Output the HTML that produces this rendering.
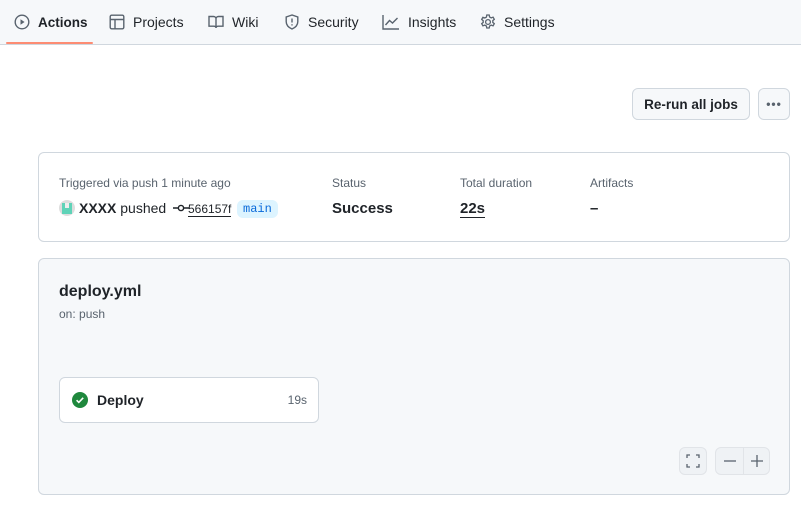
<!DOCTYPE html>
<html><head><meta charset="utf-8"><style>
*{box-sizing:border-box;margin:0;padding:0}
body{width:801px;height:510px;overflow:hidden;background:#fff;font-family:"Liberation Sans",sans-serif;color:#1f2328;position:relative}
.nav{position:absolute;left:0;top:0;width:801px;height:45px;background:#f6f8fa;border-bottom:1px solid #d0d7de}
.tab{position:absolute;top:0;height:44px;display:flex;align-items:center;font-size:14px;color:#1f2328}
.tab svg{margin-right:8px}
.ul{position:absolute;left:6px;top:42px;width:87px;height:2px;background:#fd8c73;border-radius:2px}
.btn{position:absolute;border:1px solid #d0d7de;background:#f6f8fa;border-radius:6px;font-size:14px;font-weight:bold;display:flex;align-items:center;justify-content:center}
.card{position:absolute;border:1px solid #d0d7de;border-radius:6px}
.lbl{position:absolute;font-size:12px;color:#59636e}
.val{position:absolute;font-size:15px;font-weight:bold}
</style></head><body>
<div class="nav">
<div class="tab" style="left:14px;font-weight:bold;font-size:13.5px"><svg width="16" height="16" viewBox="0 0 16 16" fill="none" stroke="#59636e" stroke-width="1.4"><circle cx="8" cy="8" r="6.8"/><path d="M6.5 5.3v5.4L10.6 8z" fill="#59636e" stroke="none"/></svg>Actions</div>
<div class="tab" style="left:109px"><svg width="16" height="16" viewBox="0 0 16 16" fill="none" stroke="#59636e" stroke-width="1.4"><rect x="1.2" y="1.2" width="13.6" height="13.6" rx="1.5"/><path d="M1.2 5.5h13.6M6 5.5v9.3"/></svg>Projects</div>
<div class="tab" style="left:208px"><svg width="16" height="16" viewBox="0 0 16 16" fill="none" stroke="#59636e" stroke-width="1.4"><path d="M1 2.5h4.5c1.4 0 2.5 1 2.5 2.3V14c0-1-1-1.8-2.2-1.8H1zM15 2.5h-4.5C9.1 2.5 8 3.5 8 4.8V14c0-1 1-1.8 2.2-1.8H15z"/></svg>Wiki</div>
<div class="tab" style="left:284px"><svg width="16" height="16" viewBox="0 0 16 16" fill="none" stroke="#59636e" stroke-width="1.4"><path d="M8 1L2.2 3v4.6c0 3.5 2.6 6 5.8 7.4 3.2-1.4 5.8-3.9 5.8-7.4V3z"/><path d="M8 4.5v4M8 10.3v1.2"/></svg>Security</div>
<div class="tab" style="left:382px"><svg width="18" height="16" viewBox="0 0 18 16" fill="none" stroke="#59636e" stroke-width="1.4"><path d="M1 1v14h16M3.5 11l4-4.5 3 2.5 5-5"/></svg>Insights</div>
<div class="tab" style="left:480px"><svg width="16" height="16" viewBox="0 0 16 16" fill="none" stroke="#59636e" stroke-width="1.3"><circle cx="8" cy="8" r="2.4"/><path d="M6.8 1h2.4l.4 2 1.6.9 1.9-.7 1.2 2.1-1.5 1.3v1.8l1.5 1.3-1.2 2.1-1.9-.7-1.6.9-.4 2H6.8l-.4-2-1.6-.9-1.9.7-1.2-2.1 1.5-1.3V6.7L1.7 5.4l1.2-2.1 1.9.7 1.6-.9z"/></svg>Settings</div>
<div class="ul"></div>
</div>
<div class="btn" style="left:632px;top:88px;width:118px;height:32px;font-size:13.5px">Re-run all jobs</div>
<div class="btn" style="left:758px;top:88px;width:32px;height:32px;color:#59636e;letter-spacing:1px;font-size:12px">•••</div>

<div class="card" style="left:38px;top:152px;width:752px;height:90px;background:#fff">
<div class="lbl" style="left:20px;top:23px">Triggered via push 1 minute ago</div>
<div style="position:absolute;left:20px;top:47px;width:16px;height:16px;border-radius:50%;background:#ddd;overflow:hidden"><div style="position:absolute;left:3px;top:3px;width:10px;height:11px;background:#5fd3b8"></div><div style="position:absolute;left:6px;top:3px;width:4px;height:5px;background:#eee"></div></div>
<div style="position:absolute;left:40px;top:47px;font-size:14px"><b>XXXX</b> pushed</div>
<svg style="position:absolute;left:134px;top:50px" width="16" height="10" viewBox="0 0 16 10" fill="none" stroke="#1f2328" stroke-width="1.4"><circle cx="8" cy="5" r="2.6"/><path d="M0 5h5.4M10.6 5H16"/></svg>
<div style="position:absolute;left:149px;top:49px;font-size:12px;border-bottom:1px solid #1f2328;line-height:14px">566157f</div>
<div style="position:absolute;left:198px;top:47px;height:18px;padding:0 6px;background:#ddf4ff;color:#0969da;border-radius:6px;font-family:'Liberation Mono',monospace;font-size:12px;line-height:18px">main</div>
<div class="lbl" style="left:293px;top:23px">Status</div>
<div class="val" style="left:293px;top:47px">Success</div>
<div class="lbl" style="left:421px;top:23px">Total duration</div>
<div class="val" style="left:421px;top:47px;border-bottom:1px solid #1f2328;line-height:17px">22s</div>
<div class="lbl" style="left:551px;top:23px">Artifacts</div>
<div class="val" style="left:551px;top:47px">–</div>
</div>

<div class="card" style="left:38px;top:258px;width:752px;height:237px;background:#f6f8fa">
<div style="position:absolute;left:20px;top:24px;font-size:16px;font-weight:bold">deploy.yml</div>
<div class="lbl" style="left:20px;top:48px;font-size:12px">on: push</div>
<div style="position:absolute;left:20px;top:118px;width:260px;height:46px;background:#fff;border:1px solid #d0d7de;border-radius:6px">
<svg style="position:absolute;left:12px;top:14px" width="16" height="16" viewBox="0 0 16 16"><circle cx="8" cy="8" r="8" fill="#1f883d"/><path d="M4.6 8.2l2.2 2.2 4.4-4.6" fill="none" stroke="#fff" stroke-width="1.6"/></svg>
<div style="position:absolute;left:37px;top:14px;font-size:14px;font-weight:bold">Deploy</div>
<div style="position:absolute;right:11px;top:15px;font-size:12px;color:#59636e">19s</div>
</div>
<div style="position:absolute;left:640px;top:188px;width:28px;height:28px;border:1px solid #e1e4e8;border-radius:6px;background:#eff2f5"><svg style="position:absolute;left:6px;top:6px" width="14" height="14" viewBox="0 0 14 14" fill="none" stroke="#59636e" stroke-width="1.3"><path d="M1 4V1h3M10 1h3v3M13 10v3h-3M4 13H1v-3"/></svg></div>
<div style="position:absolute;left:676px;top:188px;width:55px;height:28px;border:1px solid #e1e4e8;border-radius:6px;background:#eff2f5"><div style="position:absolute;left:27px;top:0;width:1px;height:26px;background:#e1e4e8"></div><svg style="position:absolute;left:7px;top:6px" width="14" height="14"><path d="M1 7h12" stroke="#59636e" stroke-width="1.3"/></svg><svg style="position:absolute;left:34px;top:6px" width="14" height="14"><path d="M1 7h12M7 1v12" stroke="#59636e" stroke-width="1.3"/></svg></div>
</div>
</body></html>
